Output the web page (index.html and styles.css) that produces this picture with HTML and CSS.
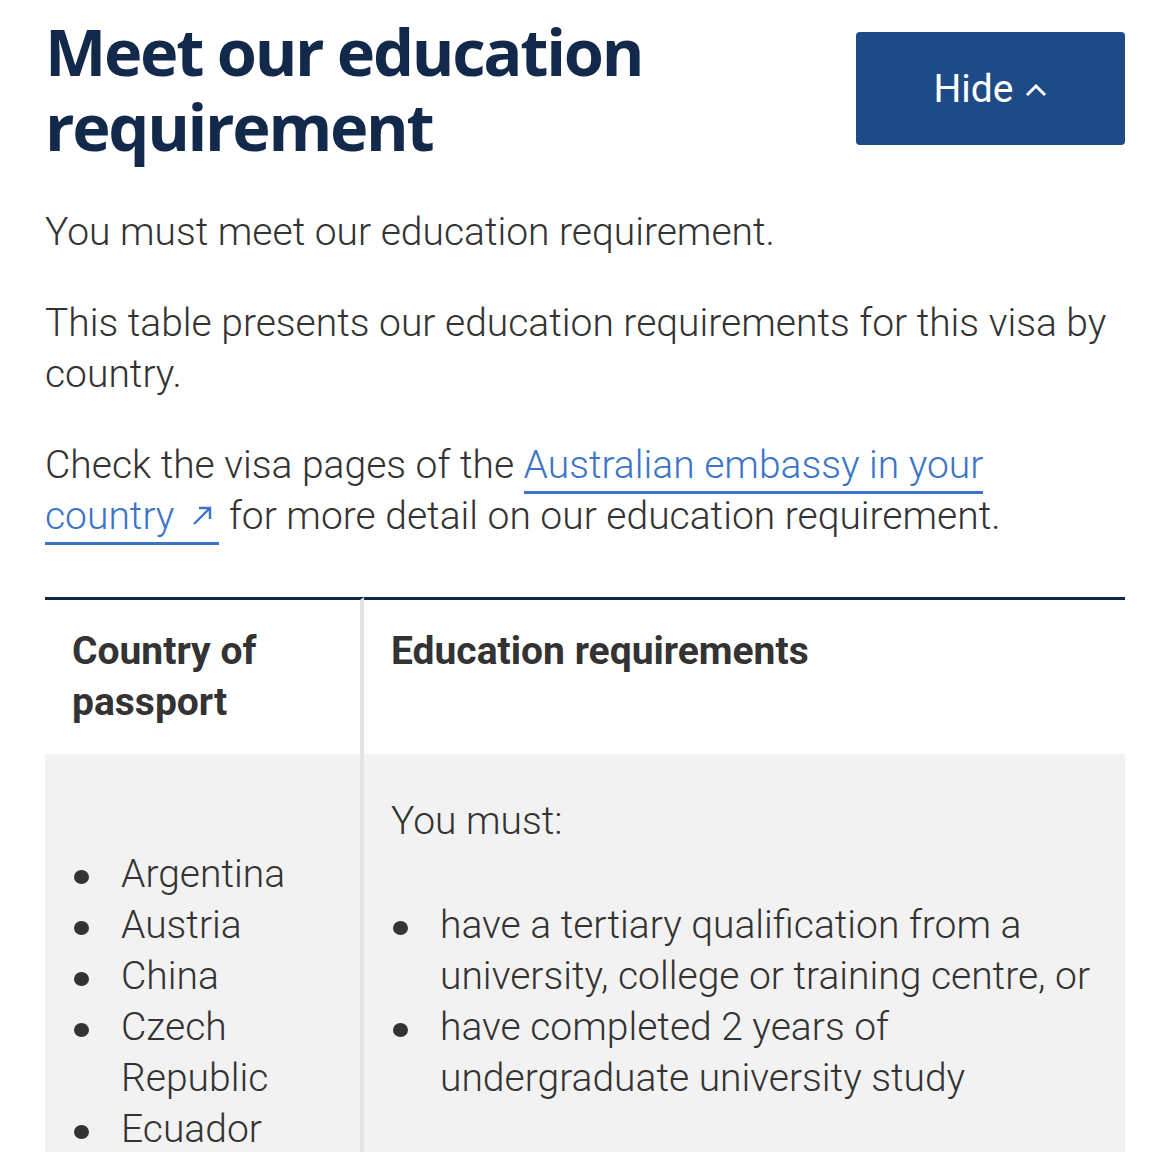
FILE: index.html
```html
<!DOCTYPE html>
<html lang="en">
<head>
<meta charset="utf-8">
<title>Meet our education requirement</title>
<link rel="stylesheet" href="styles.css">
</head>
<body>
<main class="page">
  <header class="head">
    <h1 class="title">Meet our education requirement</h1>
    <button class="toggle" type="button">Hide <svg class="chev" width="22" height="14" viewBox="0 0 22 14" aria-hidden="true"><path d="M2 12 L11 3 L20 12" fill="none" stroke="#fff" stroke-width="3"/></svg></button>
  </header>

  <p class="text">You must meet our education requirement.</p>
  <p class="text">This table presents our education requirements for this visa by country.</p>
  <p class="text">Check the visa pages of the <a class="link" href="#">Australian embassy in your <span class="nowrap">country<svg class="ext" width="22" height="22" viewBox="0 0 22 22" aria-hidden="true"><path d="M3 19 L19 3 M8 3 H19 V14" fill="none" stroke="#3b74c8" stroke-width="2.4"/></svg></span></a> for more detail on our education requirement.</p>

  <table class="req">
    <thead>
      <tr>
        <th class="col-country">Country of passport</th>
        <th class="col-edu">Education requirements</th>
      </tr>
    </thead>
    <tbody>
      <tr>
        <td class="col-country">
          <ul class="list countries">
            <li>Argentina</li>
            <li>Austria</li>
            <li>China</li>
            <li>Czech Republic</li>
            <li>Ecuador</li>
            <li>Hungary</li>
            <li>Indonesia</li>
          </ul>
        </td>
        <td class="col-edu">
          <p class="cell-p">You must:</p>
          <ul class="list reqs">
            <li>have a tertiary qualification from a university, college or training centre, or</li>
            <li>have completed 2 years of undergraduate university study</li>
          </ul>
        </td>
      </tr>
    </tbody>
  </table>
</main>
</body>
</html>
```

FILE: styles.css
```css
html, body {
  margin: 0;
  padding: 0;
  background: #ffffff;
}

.page {
  padding: 14px 45px 0 45px;
  font-family: Roboto, "Noto Sans", sans-serif;
  color: #333333;
}

.head {
  display: flex;
  justify-content: space-between;
  align-items: flex-start;
  gap: 24px;
}

.title {
  margin: 0;
  font-family: "Open Sans", "Noto Sans", sans-serif;
  font-weight: 700;
  font-size: 65px;
  line-height: 75px;
  letter-spacing: -2.3px;
  color: #13294b;
}

.toggle {
  flex: 0 0 auto;
  margin-top: 18px;
  width: 269px;
  height: 113px;
  border: none;
  border-radius: 4px;
  background: #1e4b88;
  color: #ffffff;
  font-family: Roboto, sans-serif;
  font-weight: 400;
  font-size: 39px;
  display: flex;
  align-items: center;
  justify-content: center;
  gap: 12px;
  padding: 0;
}

.chev {
  display: block;
  margin-top: 2px;
}

.text {
  margin: 40px 0 0 0;
  font-weight: 300;
  font-size: 39px;
  line-height: 51px;
}

.head + .text {
  margin-top: 43px;
}

.link {
  color: #3b74c8;
  text-decoration: none;
  padding-bottom: 3px;
  border-bottom: 3px solid #3b74c8;
}

.nowrap {
  white-space: nowrap;
}

.ext {
  display: inline-block;
  vertical-align: 2px;
  margin: 0 6px 0 17px;
}

.req {
  margin-top: 55px;
  width: 100%;
  border-collapse: separate;
  border-spacing: 0;
  font-size: 39px;
  line-height: 51px;
}

.req th {
  text-align: left;
  vertical-align: top;
  font-weight: 700;
  color: #333333;
  padding: 26px 26px 26px 27px;
  border-top: 3px solid #13294b;
  background: #ffffff;
}

.req td {
  vertical-align: top;
  background: #f2f2f2;
  font-weight: 300;
  padding: 42px 26px 26px 27px;
}

.col-country {
  width: 262px;
  border-right: 4px solid #e3e3e3;
}

.req td.col-country {
  padding-top: 95px;
}

.cell-p {
  margin: 0;
}

.list {
  margin: 0;
  padding: 0;
  list-style: none;
}

.list li {
  display: grid;
  grid-template-columns: 49px 1fr;
}

.list li::before {
  content: "";
  width: 15px;
  height: 14px;
  margin: 21px 0 0 2px;
  border-radius: 50%;
  background: #333333;
}

.reqs {
  margin-top: 53px;
}
```
